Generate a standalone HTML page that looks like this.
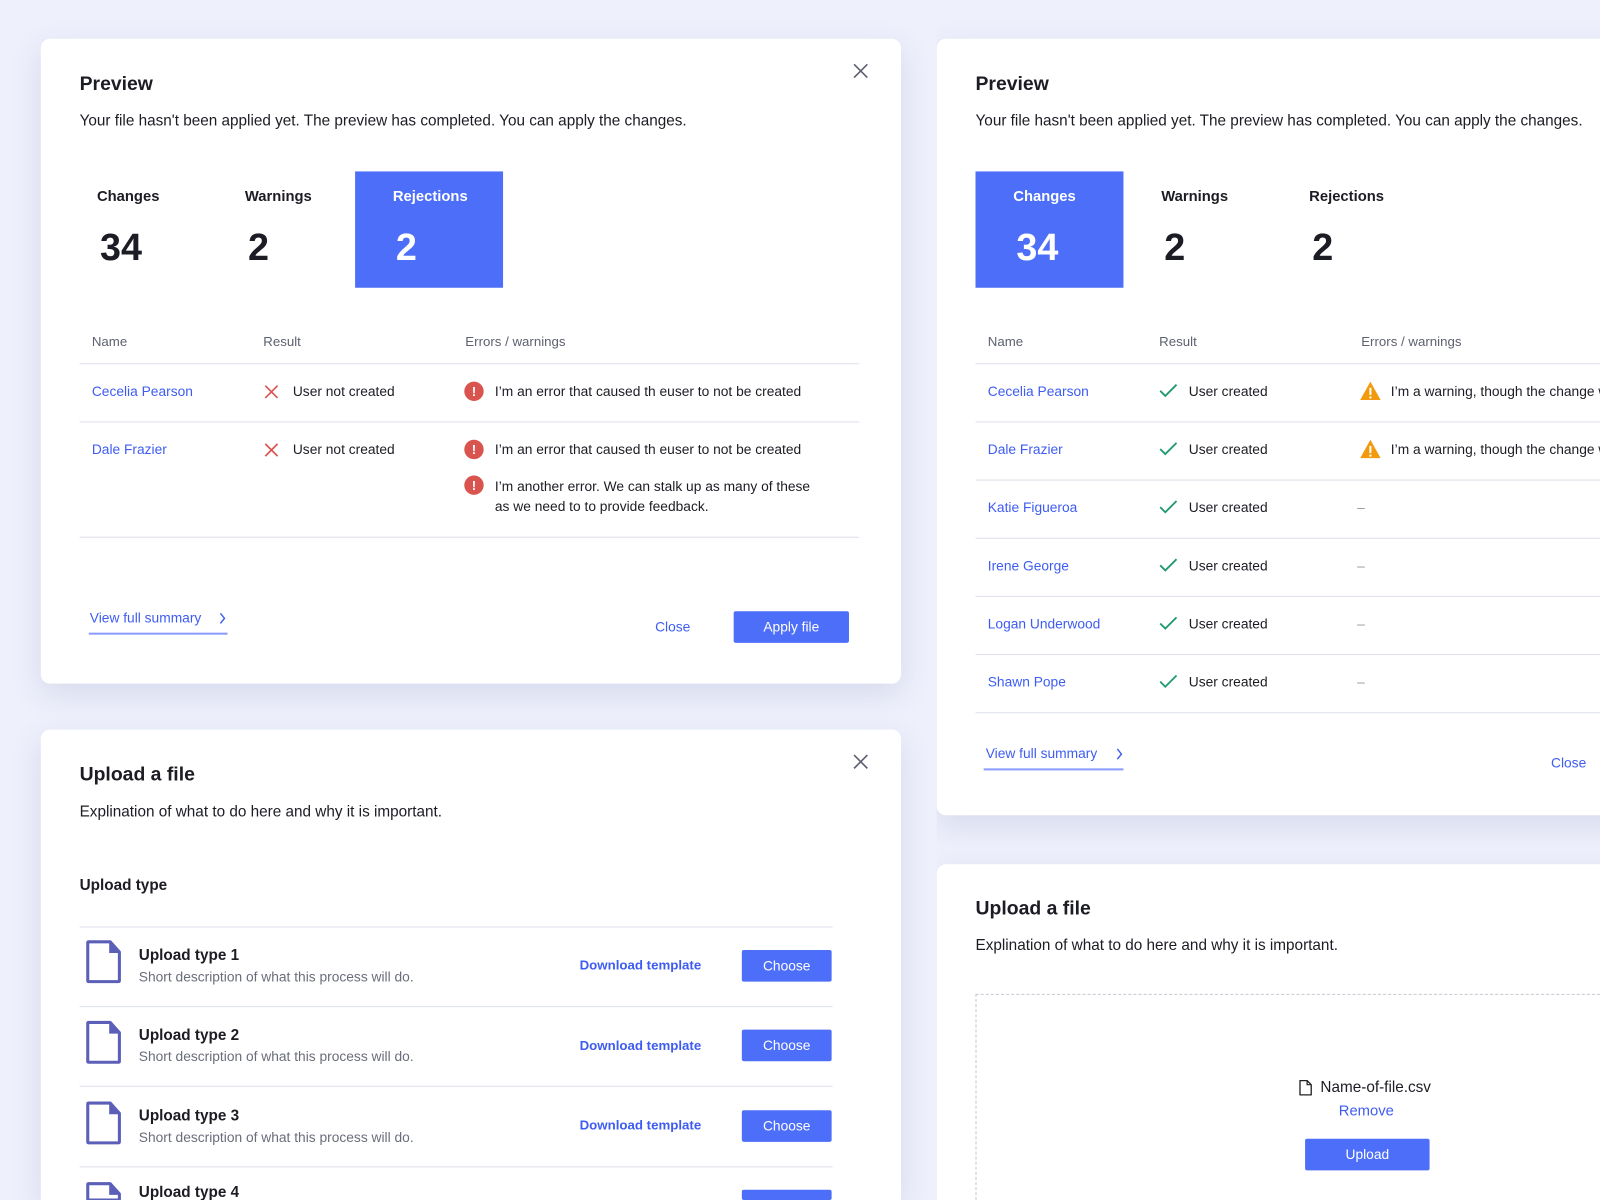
<!DOCTYPE html>
<html><head><meta charset="utf-8"><style>
html,body{margin:0;padding:0;width:1600px;height:1200px;overflow:hidden;background:#eef0fc;}
#w{position:absolute;left:0;top:0;width:1568px;height:1176px;overflow:hidden;transform:scale(1.0204);transform-origin:0 0;font-family:"Liberation Sans",sans-serif;color:#1c1c24;}
.a{position:absolute;white-space:nowrap;}
.card{position:absolute;background:#fff;border-radius:9px;box-shadow:0 10px 30px rgba(60,70,130,.13);}
.t{font-size:19px;font-weight:bold;}
.d{font-size:15px;}
.lbl{font-size:14.5px;font-weight:bold;}
.num{font-size:37px;font-weight:bold;}
.box{position:absolute;background:#4d6ef8;width:145px;height:114px;}
.th{font-size:13px;color:#5e6170;}
.line{position:absolute;height:1px;background:#dfe0ea;}
.lk{color:#3e5cf2;font-size:13.5px;}
.tx{font-size:13.5px;}
.btn{position:absolute;background:#4d6ef8;color:#fff;border-radius:2px;font-size:13.5px;text-align:center;}
.err{position:absolute;width:19px;height:19px;border-radius:50%;background:#d9534f;color:#fff;font-size:13px;font-weight:bold;text-align:center;line-height:19px;}
.clip{position:absolute;left:918px;top:0;width:650px;height:1176px;overflow:hidden;}
</style></head><body><div id="w">

<!-- Card 1 -->
<div class="card" style="left:40px;top:38px;width:843px;height:632px;"></div>
<div class="a t" style="left:78px;top:72px;">Preview</div>
<svg class="a" style="left:836px;top:62px" width="15" height="15"><path d="M1 1L14 14M14 1L1 14" stroke="#5e6170" stroke-width="1.6"/></svg>
<div class="a d" style="left:78px;top:110px;">Your file hasn't been applied yet. The preview has completed. You can apply the changes.</div>
<div class="box" style="left:348px;top:168px;"></div>
<div class="a lbl" style="left:95px;top:185px;">Changes</div>
<div class="a lbl" style="left:240px;top:185px;">Warnings</div>
<div class="a lbl" style="left:385px;top:185px;color:#fff">Rejections</div>
<div class="a num" style="left:98px;top:222px;">34</div>
<div class="a num" style="left:243px;top:222px;">2</div>
<div class="a num" style="left:388px;top:222px;color:#fff">2</div>
<div class="a th" style="left:90px;top:327px;">Name</div>
<div class="a th" style="left:258px;top:327px;">Result</div>
<div class="a th" style="left:456px;top:327px;">Errors / warnings</div>
<div class="line" style="left:78px;top:356px;width:764px"></div>
<div class="line" style="left:78px;top:413px;width:764px"></div>
<div class="line" style="left:78px;top:526px;width:764px"></div>
<div class="a lk" style="left:90px;top:376px;">Cecelia Pearson</div>
<div class="a lk" style="left:90px;top:433px;">Dale Frazier</div>
<svg class="a" style="left:259px;top:377px" width="14" height="14"><path d="M1 1L13 13M13 1L1 13" stroke="#d9534f" stroke-width="1.6"/></svg>
<svg class="a" style="left:259px;top:434px" width="14" height="14"><path d="M1 1L13 13M13 1L1 13" stroke="#d9534f" stroke-width="1.6"/></svg>
<div class="a tx" style="left:287px;top:376px;">User not created</div>
<div class="a tx" style="left:287px;top:433px;">User not created</div>
<div class="err" style="left:455px;top:374px;">!</div>
<div class="err" style="left:455px;top:431px;">!</div>
<div class="err" style="left:455px;top:466px;">!</div>
<div class="a tx" style="left:485px;top:376px;">I’m an error that caused th euser to not be created</div>
<div class="a tx" style="left:485px;top:433px;">I’m an error that caused th euser to not be created</div>
<div class="a tx" style="left:485px;top:467px;line-height:20px;">I’m another error. We can stalk up as many of these<br>as we need to to provide feedback.</div>
<div class="a lk" style="left:88px;top:598px;">View full summary</div>
<svg class="a" style="left:214px;top:600px" width="8" height="12"><path d="M2 1L6 6L2 11" stroke="#3e5cf2" fill="none" stroke-width="1.4"/></svg>
<div class="a" style="left:87px;top:620px;width:136px;height:2px;background:#8b9cff"></div>
<div class="a lk" style="left:642px;top:607px;">Close</div>
<div class="btn" style="left:719px;top:599px;width:113px;height:31px;line-height:31px;">Apply file</div>

<!-- Card 2 -->
<div class="card" style="left:40px;top:715px;width:843px;height:461px;border-radius:9px 9px 0 0;"></div>
<div class="a t" style="left:78px;top:749px;">Upload a file</div>
<svg class="a" style="left:836px;top:739px" width="15" height="15"><path d="M1 1L14 14M14 1L1 14" stroke="#5e6170" stroke-width="1.6"/></svg>
<div class="a d" style="left:78px;top:787px;">Explination of what to do here and why it is important.</div>
<div class="a" style="left:78px;top:859px;font-size:15px;font-weight:bold;">Upload type</div>
<div class="line" style="left:78px;top:908px;width:738px"></div>
<div class="line" style="left:78px;top:986px;width:738px"></div>
<div class="line" style="left:78px;top:1064px;width:738px"></div>
<div class="line" style="left:78px;top:1143px;width:738px"></div>

<svg class="a" style="left:84px;top:921px" width="35" height="43"><path d="M2 3Q2 2 3 2H24L33 12V40Q33 41 32 41H3Q2 41 2 40Z" fill="#fff" stroke="#5b5fb8" stroke-width="3" stroke-linejoin="round"/><path d="M23 2V13H33Z" fill="#5b5fb8"/></svg>
<svg class="a" style="left:84px;top:1000px" width="35" height="43"><path d="M2 3Q2 2 3 2H24L33 12V40Q33 41 32 41H3Q2 41 2 40Z" fill="#fff" stroke="#5b5fb8" stroke-width="3" stroke-linejoin="round"/><path d="M23 2V13H33Z" fill="#5b5fb8"/></svg>
<svg class="a" style="left:84px;top:1079px" width="35" height="43"><path d="M2 3Q2 2 3 2H24L33 12V40Q33 41 32 41H3Q2 41 2 40Z" fill="#fff" stroke="#5b5fb8" stroke-width="3" stroke-linejoin="round"/><path d="M23 2V13H33Z" fill="#5b5fb8"/></svg>
<svg class="a" style="left:84px;top:1158px" width="35" height="18"><path d="M2 3Q2 2 3 2H24L33 12V18H2Z" fill="#fff" stroke="#5b5fb8" stroke-width="3" stroke-linejoin="round"/><path d="M23 2V13H33Z" fill="#5b5fb8"/></svg>

<div class="a" style="left:136px;top:928px;font-size:15px;font-weight:bold;">Upload type 1</div>
<div class="a" style="left:136px;top:950px;font-size:13.5px;color:#6a6d7a;">Short description of what this process will do.</div>
<div class="a" style="left:136px;top:1006px;font-size:15px;font-weight:bold;">Upload type 2</div>
<div class="a" style="left:136px;top:1028px;font-size:13.5px;color:#6a6d7a;">Short description of what this process will do.</div>
<div class="a" style="left:136px;top:1085px;font-size:15px;font-weight:bold;">Upload type 3</div>
<div class="a" style="left:136px;top:1107px;font-size:13.5px;color:#6a6d7a;">Short description of what this process will do.</div>
<div class="a" style="left:136px;top:1162px;font-size:15px;font-weight:bold;line-height:14px;height:14px;overflow:hidden;">Upload type 4</div>
<div class="a lk" style="left:568px;top:938px;font-weight:bold;font-size:13px;">Download template</div>
<div class="a lk" style="left:568px;top:1017px;font-weight:bold;font-size:13px;">Download template</div>
<div class="a lk" style="left:568px;top:1095px;font-weight:bold;font-size:13px;">Download template</div>
<div class="btn" style="left:727px;top:931px;width:88px;height:31px;line-height:31px;">Choose</div>
<div class="btn" style="left:727px;top:1009px;width:88px;height:31px;line-height:31px;">Choose</div>
<div class="btn" style="left:727px;top:1088px;width:88px;height:31px;line-height:31px;">Choose</div>
<div class="btn" style="left:727px;top:1166px;width:88px;height:10px;"></div>

<!-- Right column -->
<div class="clip">
<div style="position:absolute;left:-918px;top:0;width:1568px;height:1176px;">
<div class="card" style="left:918px;top:38px;width:700px;height:761px;"></div>
<div class="a t" style="left:956px;top:72px;">Preview</div>
<div class="a d" style="left:956px;top:110px;">Your file hasn't been applied yet. The preview has completed. You can apply the changes.</div>
<div class="box" style="left:956px;top:168px;"></div>
<div class="a lbl" style="left:993px;top:185px;color:#fff">Changes</div>
<div class="a lbl" style="left:1138px;top:185px;">Warnings</div>
<div class="a lbl" style="left:1283px;top:185px;">Rejections</div>
<div class="a num" style="left:996px;top:222px;color:#fff">34</div>
<div class="a num" style="left:1141px;top:222px;">2</div>
<div class="a num" style="left:1286px;top:222px;">2</div>
<div class="a th" style="left:968px;top:327px;">Name</div>
<div class="a th" style="left:1136px;top:327px;">Result</div>
<div class="a th" style="left:1334px;top:327px;">Errors / warnings</div>
<div class="line" style="left:956px;top:356px;width:620px"></div>
<div class="line" style="left:956px;top:413px;width:620px"></div>
<div class="line" style="left:956px;top:470px;width:620px"></div>
<div class="line" style="left:956px;top:527px;width:620px"></div>
<div class="line" style="left:956px;top:584px;width:620px"></div>
<div class="line" style="left:956px;top:641px;width:620px"></div>
<div class="line" style="left:956px;top:698px;width:620px"></div>

<div class="a lk" style="left:968px;top:376px;">Cecelia Pearson</div>
<div class="a lk" style="left:968px;top:433px;">Dale Frazier</div>
<div class="a lk" style="left:968px;top:490px;">Katie Figueroa</div>
<div class="a lk" style="left:968px;top:547px;">Irene George</div>
<div class="a lk" style="left:968px;top:604px;">Logan Underwood</div>
<div class="a lk" style="left:968px;top:661px;">Shawn Pope</div>

<svg class="a" style="left:1136px;top:376px" width="18" height="14"><path d="M1 7L6 12L17 1" stroke="#1f9a6c" fill="none" stroke-width="1.8"/></svg>
<svg class="a" style="left:1136px;top:433px" width="18" height="14"><path d="M1 7L6 12L17 1" stroke="#1f9a6c" fill="none" stroke-width="1.8"/></svg>
<svg class="a" style="left:1136px;top:490px" width="18" height="14"><path d="M1 7L6 12L17 1" stroke="#1f9a6c" fill="none" stroke-width="1.8"/></svg>
<svg class="a" style="left:1136px;top:547px" width="18" height="14"><path d="M1 7L6 12L17 1" stroke="#1f9a6c" fill="none" stroke-width="1.8"/></svg>
<svg class="a" style="left:1136px;top:604px" width="18" height="14"><path d="M1 7L6 12L17 1" stroke="#1f9a6c" fill="none" stroke-width="1.8"/></svg>
<svg class="a" style="left:1136px;top:661px" width="18" height="14"><path d="M1 7L6 12L17 1" stroke="#1f9a6c" fill="none" stroke-width="1.8"/></svg>
<div class="a tx" style="left:1165px;top:376px;">User created</div>
<div class="a tx" style="left:1165px;top:433px;">User created</div>
<div class="a tx" style="left:1165px;top:490px;">User created</div>
<div class="a tx" style="left:1165px;top:547px;">User created</div>
<div class="a tx" style="left:1165px;top:604px;">User created</div>
<div class="a tx" style="left:1165px;top:661px;">User created</div>

<svg class="a" style="left:1332px;top:373px" width="22" height="20"><path d="M11 1L21 19H1Z" fill="#f29a0e"/><rect x="10" y="7" width="2" height="7" fill="#fff"/><rect x="10" y="15.5" width="2" height="2" fill="#fff"/></svg>
<svg class="a" style="left:1332px;top:430px" width="22" height="20"><path d="M11 1L21 19H1Z" fill="#f29a0e"/><rect x="10" y="7" width="2" height="7" fill="#fff"/><rect x="10" y="15.5" width="2" height="2" fill="#fff"/></svg>
<div class="a tx" style="left:1363px;top:376px;">I’m a warning, though the change will be made</div>
<div class="a tx" style="left:1363px;top:433px;">I’m a warning, though the change will be made</div>
<div class="a tx" style="left:1330px;top:490px;color:#999">–</div>
<div class="a tx" style="left:1330px;top:547px;color:#999">–</div>
<div class="a tx" style="left:1330px;top:604px;color:#999">–</div>
<div class="a tx" style="left:1330px;top:661px;color:#999">–</div>

<div class="a lk" style="left:966px;top:731px;">View full summary</div>
<svg class="a" style="left:1093px;top:733px" width="8" height="12"><path d="M2 1L6 6L2 11" stroke="#3e5cf2" fill="none" stroke-width="1.4"/></svg>
<div class="a" style="left:964px;top:753px;width:137px;height:2px;background:#8b9cff"></div>
<div class="a lk" style="left:1520px;top:740px;">Close</div>

<div class="card" style="left:918px;top:847px;width:700px;height:329px;border-radius:9px 9px 0 0;"></div>
<div class="a t" style="left:956px;top:880px;">Upload a file</div>
<div class="a d" style="left:956px;top:918px;">Explination of what to do here and why it is important.</div>
<div class="a" style="left:956px;top:974px;width:700px;height:300px;border:1px dashed #c5c7d2;"></div>
<svg class="a" style="left:1273px;top:1058px" width="13" height="16"><path d="M1 1H8L12 5V15H1Z" fill="#fff" stroke="#222" stroke-width="1.3" stroke-linejoin="round"/><path d="M8 1V5H12" fill="none" stroke="#222" stroke-width="1.2"/></svg>
<div class="a" style="left:1294px;top:1057px;font-size:15px;">Name-of-file.csv</div>
<div class="a lk" style="left:1312px;top:1081px;font-size:14.5px;">Remove</div>
<div class="btn" style="left:1279px;top:1116px;width:122px;height:31px;line-height:31px;">Upload</div>
</div>
</div>

</div></body></html>
